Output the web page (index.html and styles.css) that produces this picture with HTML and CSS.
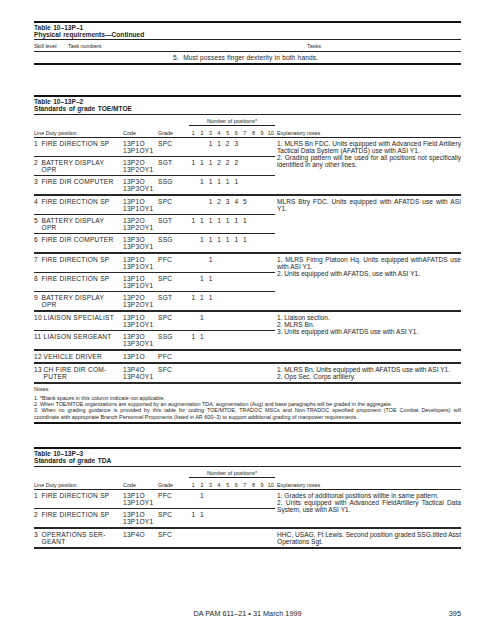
FILE: index.html
```html
<!DOCTYPE html>
<html lang="en">
<head>
<meta charset="utf-8">
<title>DA PAM 611-21 page 395</title>
<link rel="stylesheet" href="styles.css">
</head>
<body>
<div class="page">

  <section class="tbl t1">
    <div class="cap">
      <div>Table 10–13P–1</div>
      <div>Physical requirements—Continued</div>
    </div>
    <div class="t1-head">
      <span>Skill level</span><span>Task numbers</span><span class="tasks-h">Tasks</span>
    </div>
    <div class="t1-row">
      <span></span><span></span><span>5.&nbsp; Must possess finger dexterity in both hands.</span>
    </div>
  </section>

  <section class="tbl t2">
    <div class="cap">
      <div>Table 10–13P–2</div>
      <div>Standards of grade TOE/MTOE</div>
    </div>
    <div class="pos-head"><span class="lbl">Number of positions*</span></div>
    <div class="colhead">
      <span>Line Duty position</span><span>Code</span><span>Grade</span>
      <span class="n">1</span><span class="n">2</span><span class="n">3</span><span class="n">4</span><span class="n">5</span><span class="n">6</span><span class="n">7</span><span class="n">8</span><span class="n">9</span><span class="n">10</span>
      <span class="expl-h">Explanatory notes</span>
    </div>

    <div class="grp">
      <div class="rows">
        <div class="row"><span>1</span><span>FIRE DIRECTION SP</span><span>13P1O<br>13P1OY1</span><span>SPC</span><span class="n"></span><span class="n"></span><span class="n">1</span><span class="n">1</span><span class="n">2</span><span class="n">3</span></div>
        <div class="row"><span>2</span><span>BATTERY DISPLAY<br>OPR</span><span>13P2O<br>13P2OY1</span><span>SGT</span><span class="n">1</span><span class="n">1</span><span class="n">1</span><span class="n">2</span><span class="n">2</span><span class="n">2</span></div>
        <div class="row"><span>3</span><span>FIRE DIR COMPUTER</span><span>13P3O<br>13P3OY1</span><span>SSG</span><span class="n"></span><span class="n">1</span><span class="n">1</span><span class="n">1</span><span class="n">1</span><span class="n">1</span></div>
      </div>
      <div class="expl">
        <span class="j">1. MLRS Bn FDC. Units equipped with Advanced Field Artillery</span>
        <span class="l">Tactical Data System (AFATDS) use with ASI Y1.</span>
        <span class="j">2. Grading pattern will be used for all positions not specifically</span>
        <span class="l">identified in any other lines.</span>
      </div>
    </div>

    <div class="grp">
      <div class="rows">
        <div class="row"><span>4</span><span>FIRE DIRECTION SP</span><span>13P1O<br>13P1OY1</span><span>SPC</span><span class="n"></span><span class="n"></span><span class="n">1</span><span class="n">2</span><span class="n">3</span><span class="n">4</span><span class="n">5</span></div>
        <div class="row"><span>5</span><span>BATTERY DISPLAY<br>OPR</span><span>13P2O<br>13P2OY1</span><span>SGT</span><span class="n">1</span><span class="n">1</span><span class="n">1</span><span class="n">1</span><span class="n">1</span><span class="n">1</span><span class="n">1</span></div>
        <div class="row"><span>6</span><span>FIRE DIR COMPUTER</span><span>13P3O<br>13P3OY1</span><span>SSG</span><span class="n"></span><span class="n">1</span><span class="n">1</span><span class="n">1</span><span class="n">1</span><span class="n">1</span><span class="n">1</span></div>
      </div>
      <div class="expl">
        <span class="j">MLRS Btry FDC. Units equipped with AFATDS use with ASI</span>
        <span class="l">Y1.</span>
      </div>
    </div>

    <div class="grp">
      <div class="rows">
        <div class="row"><span>7</span><span>FIRE DIRECTION SP</span><span>13P1O<br>13P1OY1</span><span>PFC</span><span class="n"></span><span class="n"></span><span class="n">1</span></div>
        <div class="row"><span>8</span><span>FIRE DIRECTION SP</span><span>13P1O<br>13P1OY1</span><span>SPC</span><span class="n"></span><span class="n">1</span><span class="n">1</span></div>
        <div class="row"><span>9</span><span>BATTERY DISPLAY<br>OPR</span><span>13P2O<br>13P2OY1</span><span>SGT</span><span class="n">1</span><span class="n">1</span><span class="n">1</span></div>
      </div>
      <div class="expl">
        <span class="j">1. MLRS Firing Platoon Hq. Units equipped withAFATDS use</span>
        <span class="l">with ASI Y1.</span>
        <span class="l">2. Units equipped with AFATDS, use with ASI Y1.</span>
      </div>
    </div>

    <div class="grp">
      <div class="rows">
        <div class="row dd"><span>10</span><span>LIAISON SPECIALIST</span><span>13P1O<br>13P1OY1</span><span>SPC</span><span class="n"></span><span class="n">1</span></div>
        <div class="row dd"><span>11</span><span>LIAISON SERGEANT</span><span>13P3O<br>13P3OY1</span><span>SSG</span><span class="n">1</span><span class="n">1</span></div>
      </div>
      <div class="expl">
        <span class="l">1. Liaison section.</span>
        <span class="l">2. MLRS Bn.</span>
        <span class="l">3. Units equipped with AFATDS use with ASI Y1.</span>
      </div>
    </div>

    <div class="grp">
      <div class="rows">
        <div class="row dd"><span>12</span><span>VEHICLE DRIVER</span><span>13P1O</span><span>PFC</span></div>
      </div>
      <div class="expl"></div>
    </div>

    <div class="grp">
      <div class="rows">
        <div class="row dd"><span>13</span><span>CH FIRE DIR COM-<br>PUTER</span><span>13P4O<br>13P4OY1</span><span>SFC</span></div>
      </div>
      <div class="expl">
        <span class="l">1. MLRS Bn. Units equipped with AFATDS use with ASI Y1.</span>
        <span class="l">2. Ops Sec, Corps artillery.</span>
      </div>
    </div>

    <div class="notes">
      <div class="notes-hd">Notes:</div>
      <div>1. *Blank spaces in this column indicate not applicable.</div>
      <div>2. When TOE/MTOE organizations are supported by an augmentation TDA, augmentation (Aug) and base paragraphs will be graded in the aggregate.</div>
      <div class="j">3. When no grading guidance is provided by this table for coding TOE/MTOE, TRADOC MSCs and Non-TRADOC specified proponent (TOE Combat Developers) will</div>
      <div>coordinate with appropriate Branch Personnel Proponents (listed in AR 600–3) to support additional grading of manpower requirements.</div>
    </div>
  </section>

  <section class="tbl t3">
    <div class="cap">
      <div>Table 10–13P–3</div>
      <div>Standards of grade TDA</div>
    </div>
    <div class="pos-head"><span class="lbl">Number of positions*</span></div>
    <div class="colhead">
      <span>Line Duty position</span><span>Code</span><span>Grade</span>
      <span class="n">1</span><span class="n">2</span><span class="n">3</span><span class="n">4</span><span class="n">5</span><span class="n">6</span><span class="n">7</span><span class="n">8</span><span class="n">9</span><span class="n">10</span>
      <span class="expl-h">Explanatory notes</span>
    </div>

    <div class="grp">
      <div class="rows">
        <div class="row"><span>1</span><span>FIRE DIRECTION SP</span><span>13P1O<br>13P1OY1</span><span>PFC</span><span class="n"></span><span class="n">1</span></div>
        <div class="row"><span>2</span><span>FIRE DIRECTION SP</span><span>13P1O<br>13P1OY1</span><span>SPC</span><span class="n">1</span><span class="n">1</span></div>
      </div>
      <div class="expl">
        <span class="l">1. Grades of additional positions willbe in same pattern.</span>
        <span class="j">2. Units equipped with Advanced FieldArtillery Tactical Data</span>
        <span class="l">System, use with ASI Y1.</span>
      </div>
    </div>

    <div class="grp">
      <div class="rows">
        <div class="row"><span>3</span><span>OPERATIONS SER-<br>GEANT</span><span>13P4O</span><span>SFC</span></div>
      </div>
      <div class="expl">
        <span class="j">HHC, USAG, Ft Lewis. Second position graded SSG,titled Asst</span>
        <span class="l">Operations Sgt.</span>
      </div>
    </div>
  </section>

  <footer class="foot">
    <span></span>
    <span class="foot-t">DA PAM 611–21 • 31 March 1999</span>
    <span class="foot-n">395</span>
  </footer>
</div>
</body>
</html>
```

FILE: styles.css
```css
* { box-sizing: border-box; margin: 0; padding: 0; }

html, body { background: #ffffff; }

body {
  margin: 0;
  font-family: "Liberation Sans", Arial, Helvetica, sans-serif;
  color: #1e1e1e;
}

.page {
  width: 495px;
  height: 640px;
  padding: 21px 34px 22px;
  display: flex;
  flex-direction: column;
}

.tbl { border-top: 2px solid #111; }

.cap {
  font-weight: bold;
  font-size: 6.6px;
  line-height: 7.2px;
  padding: 0.5px 0 1.5px;
  border-bottom: 1px solid #222;
  word-spacing: 0.6px;
}

/* ---- table 1 ---- */
.t1-head,
.t1-row {
  display: grid;
  grid-template-columns: 34px 105px 1fr;
}

.t1-head {
  font-size: 5.4px;
  line-height: 6.5px;
  padding: 2.5px 0 2px;
  border-bottom: 1px solid #222;
}

.tasks-h { text-align: center; padding-right: 6px; }

.t1-row {
  font-size: 6.6px;
  line-height: 7.2px;
  padding: 2px 0 1.5px;
  border-bottom: 2px solid #111;
  letter-spacing: 0.1px;
  word-spacing: 0.3px;
}

/* ---- grade tables ---- */
.t2 { margin-top: 30px; }
.t3 { margin-top: 23px; }

.pos-head {
  display: grid;
  grid-template-columns: 155px 86px 1fr;
  font-size: 5.4px;
  line-height: 6.5px;
  padding-top: 3px;
}

.pos-head .lbl {
  grid-column: 2;
  text-align: center;
  padding-bottom: 1px;
  border-bottom: 1px solid #222;
}

.colhead {
  display: grid;
  grid-template-columns: 89px 35px 31px repeat(10, 8.6px) 1fr;
  font-size: 5.4px;
  line-height: 6.5px;
  padding: 3.5px 0 1px;
  border-bottom: 1px solid #222;
  white-space: nowrap;
}

.n { text-align: center; }

.expl-h { padding-left: 2px; }

.grp {
  display: grid;
  grid-template-columns: 241px 1fr;
  border-bottom: 2px solid #262626;
}

.row {
  display: grid;
  grid-template-columns: 7.5px 81.5px 35px 31px repeat(10, 8.6px);
  font-size: 6.6px;
  line-height: 7.2px;
  padding: 1.8px 0;
  white-space: nowrap;
  letter-spacing: 0.25px;
}

.row.dd { grid-template-columns: 9.5px 79.5px 35px 31px repeat(10, 8.6px); }

.row .n { letter-spacing: 0; }

.row + .row { border-top: 1px solid #262626; }

.expl {
  font-size: 6.6px;
  line-height: 7.2px;
  padding: 1.8px 0 1.8px 2px;
  display: flex;
  flex-direction: column;
}

.expl span { display: block; white-space: nowrap; }

.j {
  text-align: justify;
  text-align-last: justify;
}

.notes {
  font-size: 5.4px;
  line-height: 6.2px;
  padding: 2.5px 0 2.5px;
  border-bottom: 2px solid #111;
  white-space: nowrap;
}

.notes-hd { margin-bottom: 2.5px; }

/* ---- footer ---- */
.foot {
  margin-top: auto;
  display: grid;
  grid-template-columns: 1fr auto 1fr;
  font-size: 7.3px;
  line-height: 9px;
}

.foot-n { text-align: right; }
```
